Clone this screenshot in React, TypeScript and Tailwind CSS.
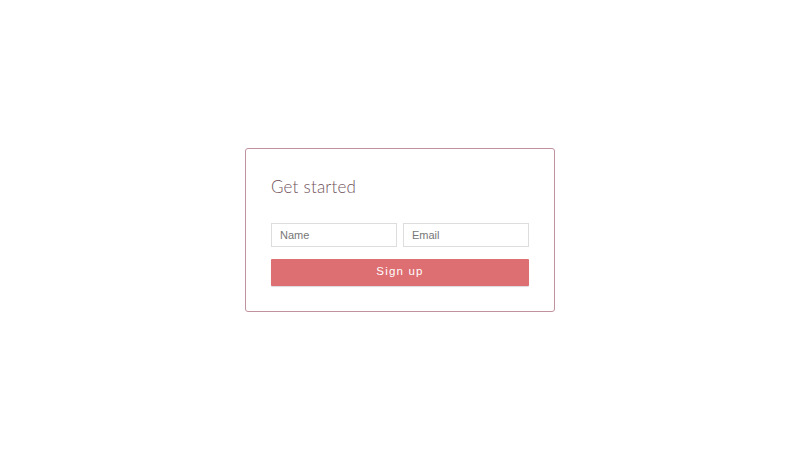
export default function App() {
  return (
    <div className="w-[800px] h-[450px] bg-white flex items-center justify-center" style={{ fontFamily: '"Liberation Sans", Arial, sans-serif' }}>
      <div className="w-[310px] h-[164px] mt-[9px] border border-[#c0929e] rounded-[3px] px-[25px] pt-[25px] pb-[25px] flex flex-col">
        <h1 className="mt-[1px] text-[17px] leading-[24px] font-light text-[#70525a] tracking-[0.2px]" style={{ fontFamily: 'Lato, "Noto Sans", sans-serif' }}>
          Get started
        </h1>
        <div className="mt-[24px] flex gap-[6px]">
          <input
            placeholder="Name"
            className="flex-1 min-w-0 h-[24px] border border-[#dddddd] px-[8px] text-[11px] text-[#555] placeholder:text-[#777] outline-none"
          />
          <input
            placeholder="Email"
            className="flex-1 min-w-0 h-[24px] border border-[#dddddd] px-[8px] text-[11px] text-[#555] placeholder:text-[#777] outline-none"
          />
        </div>
        <button className="mt-[12px] w-[258px] h-[27px] shrink-0 bg-[#dd6e71] rounded-[1px] text-white text-[11.5px] tracking-[1.2px] shadow-[0_1px_1px_rgba(0,0,0,0.15)]">
          Sign up
        </button>
      </div>
    </div>
  );
}
